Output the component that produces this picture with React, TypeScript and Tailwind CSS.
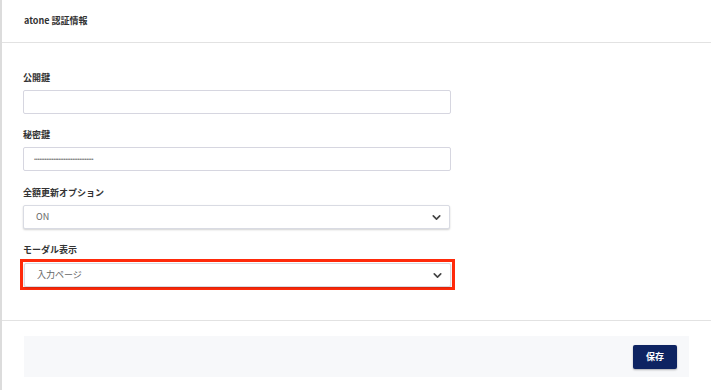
import { ChevronDown } from "lucide-react";

const font = { fontFamily: '"Noto Sans CJK JP", "Noto Sans", sans-serif' };

function Label({ children }: { children: React.ReactNode }) {
  return <p className="text-[9px] font-bold text-[#333] leading-[12px] mb-[6px]">{children}</p>;
}

function SelectBox({ value }: { value: string }) {
  return (
    <div className="flex items-center justify-between h-[24px] w-[427px] border border-[#d9dbe3] rounded-[2px] bg-white shadow-[0_1px_2px_rgba(0,0,0,0.18)] pl-[12px] pr-[6px]">
      <span className="text-[9px] text-[#666]">{value}</span>
      <ChevronDown className="w-[13px] h-[13px] text-[#444]" strokeWidth={3} />
    </div>
  );
}

export default function App() {
  return (
    <div className="w-[711px] h-[390px] bg-white border-l-2 border-[#dcdcdc] overflow-hidden" style={font}>
      <div className="h-[43px] border-b border-[#e2e2e2] flex items-center pl-[22px]">
        <h2 className="text-[9px] font-bold text-[#333]">atone 認証情報</h2>
      </div>

      <div className="pl-[21px] pt-[29px] h-[277px]">
        <Label>公開鍵</Label>
        <div className="h-[24px] w-[428px] border border-[#d6d6e0] rounded-[2px] bg-white" />

        <div className="mt-[15px]">
          <Label>秘密鍵</Label>
          <div className="h-[24px] w-[428px] border border-[#d6d6e0] rounded-[2px] bg-white flex items-center pl-[10px]">
            <span className="text-[6px] text-[#777] tracking-[-0.3px] leading-none">••••••••••••••••••••••••••••••••••</span>
          </div>
        </div>

        <div className="mt-[16px]">
          <Label>全額更新オプション</Label>
          <SelectBox value="ON" />
        </div>

        <div className="mt-[15px]">
          <Label>モーダル表示</Label>
          <div className="-ml-[3px] -mt-[3px] w-[435px] h-[31px] border-[3px] border-[#ff2a0a] p-[1px]">
            <SelectBox value="入力ページ" />
          </div>
        </div>
      </div>

      <div className="border-t border-[#e2e2e2] pt-[15px] pl-[22px]">
        <div className="w-[665px] h-[41px] bg-[#f7f8fa] flex items-center justify-end pr-[12px]">
          <button className="w-[44px] h-[24px] bg-[#0e2462] rounded-[2px] text-white text-[9px] font-bold shadow-[0_1px_2px_rgba(0,0,0,0.3)]">
            保存
          </button>
        </div>
      </div>
    </div>
  );
}
